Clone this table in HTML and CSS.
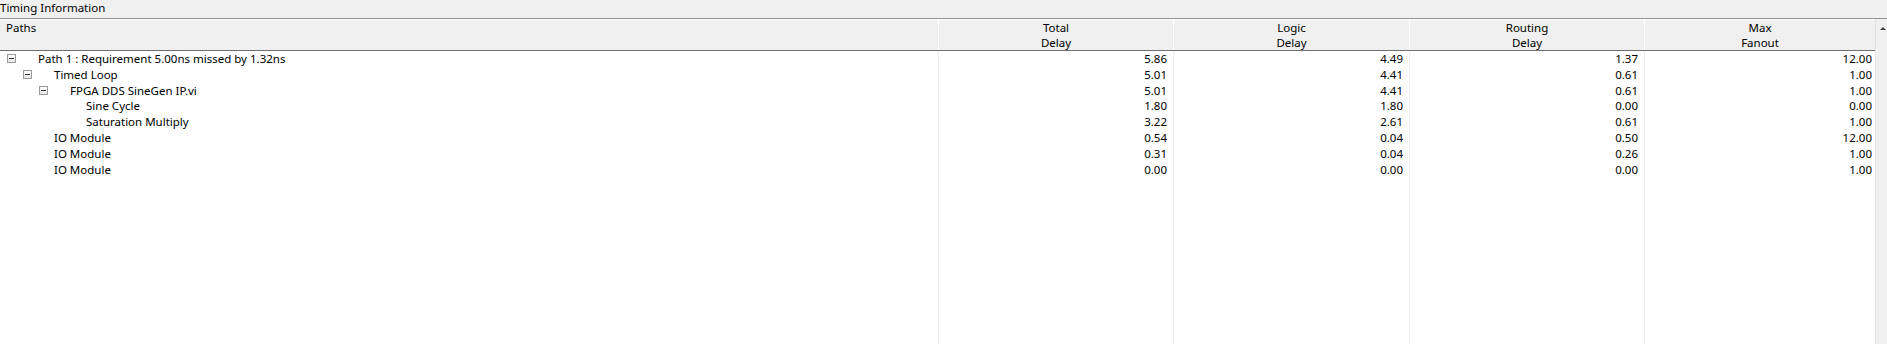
FILE: index.html
```html
<!DOCTYPE html>
<html>
<head>
<meta charset="utf-8">
<link rel="stylesheet" href="styles.css">
</head>
<body>
<div class="panel">
  <div class="title">Timing Information</div>
  <div class="main">
    <div class="table">
      <div class="header">
        <div class="hcell hleft">Paths</div>
        <div class="hcell">Total<br>Delay</div>
        <div class="hcell">Logic<br>Delay</div>
        <div class="hcell">Routing<br>Delay</div>
        <div class="hcell">Max<br>Fanout</div>
      </div>
      <div class="rows">
        <div class="row">
          <div class="cell name lvl0"><span class="toggle"></span><span class="label">Path 1 : Requirement 5.00ns missed by 1.32ns</span></div>
          <div class="cell num">5.86</div><div class="cell num">4.49</div><div class="cell num">1.37</div><div class="cell num last">12.00</div>
        </div>
        <div class="row">
          <div class="cell name lvl1"><span class="toggle"></span><span class="label">Timed Loop</span></div>
          <div class="cell num">5.01</div><div class="cell num">4.41</div><div class="cell num">0.61</div><div class="cell num last">1.00</div>
        </div>
        <div class="row">
          <div class="cell name lvl2"><span class="toggle"></span><span class="label">FPGA DDS SineGen IP.vi</span></div>
          <div class="cell num">5.01</div><div class="cell num">4.41</div><div class="cell num">0.61</div><div class="cell num last">1.00</div>
        </div>
        <div class="row">
          <div class="cell name lvl3"><span class="label">Sine Cycle</span></div>
          <div class="cell num">1.80</div><div class="cell num">1.80</div><div class="cell num">0.00</div><div class="cell num last">0.00</div>
        </div>
        <div class="row">
          <div class="cell name lvl3"><span class="label">Saturation Multiply</span></div>
          <div class="cell num">3.22</div><div class="cell num">2.61</div><div class="cell num">0.61</div><div class="cell num last">1.00</div>
        </div>
        <div class="row">
          <div class="cell name lvl2"><span class="label">IO Module</span></div>
          <div class="cell num">0.54</div><div class="cell num">0.04</div><div class="cell num">0.50</div><div class="cell num last">12.00</div>
        </div>
        <div class="row">
          <div class="cell name lvl2"><span class="label">IO Module</span></div>
          <div class="cell num">0.31</div><div class="cell num">0.04</div><div class="cell num">0.26</div><div class="cell num last">1.00</div>
        </div>
        <div class="row">
          <div class="cell name lvl2"><span class="label">IO Module</span></div>
          <div class="cell num">0.00</div><div class="cell num">0.00</div><div class="cell num">0.00</div><div class="cell num last">1.00</div>
        </div>
        <div class="row filler">
          <div class="cell"></div><div class="cell"></div><div class="cell"></div><div class="cell"></div><div class="cell"></div>
        </div>
      </div>
    </div>
    <div class="scrollbar"><span class="arrow"></span></div>
  </div>
</div>
</body>
</html>
```
FILE: styles.css
```css
html, body {
  margin: 0;
  padding: 0;
  background: #ffffff;
}
.panel {
  width: 1887px;
  height: 344px;
  display: flex;
  flex-direction: column;
  font-family: "Noto Sans", "Open Sans", sans-serif;
  font-size: 11.5px;
  color: #000;
  overflow: hidden;
}
.title {
  height: 19px;
  line-height: 15px;
  background: #f0f0f0;
  border-bottom: 1px solid #8e949a;
  box-sizing: border-box;
}
.main {
  flex: 1;
  display: flex;
  min-height: 0;
}
.table {
  flex: 1;
  display: flex;
  flex-direction: column;
}
.header, .row {
  display: grid;
  grid-template-columns: 938px 235px 236px 235px 1fr;
}
.header {
  height: 32px;
  background: #f0f0f0;
  border-top: 1px solid #ffffff;
  border-bottom: 1px solid #6f6f6f;
  box-sizing: border-box;
}
.hcell {
  text-align: center;
  line-height: 15px;
  border-left: 1px solid #ffffff;
}
.hcell.hleft {
  text-align: left;
  padding-left: 6px;
  border-left: none;
}
.rows {
  flex: 1;
  display: flex;
  flex-direction: column;
}
.row {
  height: 15.8px;
  line-height: 15.8px;
}
.row.filler {
  flex: 1;
}
.cell {
  border-left: 1px solid #ececec;
  white-space: nowrap;
}
.cell.name {
  border-left: none;
  display: flex;
  align-items: center;
}
.cell.num {
  text-align: right;
  padding-right: 6px;
}
.cell.num.last {
  padding-right: 3px;
}
.row.filler .cell:first-child {
  border-left: none;
}
.lvl0 { padding-left: 7px; }
.lvl1 { padding-left: 23px; }
.lvl2 { padding-left: 39px; }
.lvl3 { padding-left: 86px; }
.lvl2 .label:only-child { margin-left: 15px; }
.toggle {
  width: 7px;
  height: 7px;
  border: 1px solid #9a9a9a;
  background: linear-gradient(#ffffff, #e6e6e6);
  position: relative;
  margin-right: 22px;
  flex: none;
}
.toggle::after {
  content: "";
  position: absolute;
  left: 1px;
  top: 3px;
  width: 5px;
  height: 1px;
  background: #333;
}
.scrollbar {
  width: 12px;
  background: #f0f0f0;
  border-left: 1px solid #e3e3e3;
  box-sizing: border-box;
  position: relative;
}
.arrow {
  position: absolute;
  left: 4px;
  top: 8px;
  width: 0;
  height: 0;
  border-left: 3px solid transparent;
  border-right: 3px solid transparent;
  border-bottom: 3px solid #404040;
}
```
